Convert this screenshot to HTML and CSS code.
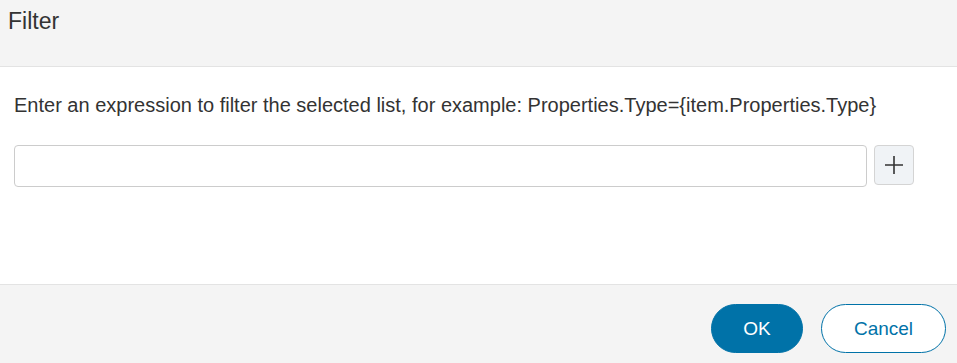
FILE: index.html
```html
<!DOCTYPE html>
<html lang="en">
<head>
    <meta charset="UTF-8">
    <meta name="viewport" content="width=device-width, initial-scale=1.0">
    <title>Filter</title>
    <link rel="stylesheet" href="styles.css">
</head>
<body>
    <div class="dialog">
        <div class="dialog-header">
            <h1 class="dialog-title">Filter</h1>
        </div>

        <div class="dialog-body">
            <p class="hint">Enter an expression to filter the selected list, for example: Properties.Type={item.Properties.Type}</p>
            <div class="input-row">
                <input class="expr-input" type="text" id="expression" name="expression">
                <button class="add-button" type="button" title="Add">
                    <svg width="20" height="20" viewBox="0 0 20 20">
                        <path d="M10 1v18M1 10h18" stroke="#333" stroke-width="1.6" fill="none"/>
                    </svg>
                </button>
            </div>
        </div>

        <!-- Footer buttons -->
        <div class="dialog-footer">
            <button class="btn btn-primary" type="button">OK</button>
            <button class="btn btn-secondary" type="button">Cancel</button>
        </div>
    </div>
</body>
</html>
```

FILE: styles.css
```css
body {
    margin: 0;
    padding: 0;
    font-family: "Liberation Sans", Arial, sans-serif;
    color: #333;
    background-color: #fff;
}

.dialog {
    width: 957px;
    height: 363px;
    display: flex;
    flex-direction: column;
}

.dialog-header {
    height: 67px;
    background-color: #f4f4f4;
    border-bottom: 1px solid #e3e3e3;
    box-sizing: border-box;
    padding: 8px 8px 0;
}

.dialog-title {
    margin: 0;
    font-size: 23px;
    font-weight: normal;
    color: #333;
}

.dialog-body {
    height: 217px;
    padding: 0 14px;
    box-sizing: border-box;
}

.hint {
    margin: 0;
    padding-top: 27px;
    font-size: 20px;
    line-height: 23px;
    color: #333;
}

.input-row {
    display: flex;
    align-items: flex-start;
    gap: 7px;
    margin-top: 28px;
}

.expr-input {
    width: 853px;
    height: 42px;
    box-sizing: border-box;
    border: 1px solid #ccc;
    border-radius: 4px;
    padding: 0 10px;
    font-size: 16px;
    font-family: inherit;
}

.add-button {
    width: 40px;
    height: 40px;
    padding: 0;
    border: 1px solid #d4d4d4;
    border-radius: 4px;
    background-color: #f0f3f6;
    display: flex;
    align-items: center;
    justify-content: center;
    cursor: pointer;
}

.dialog-footer {
    flex: 1;
    background-color: #f4f4f4;
    border-top: 1px solid #e3e3e3;
    display: flex;
    justify-content: flex-end;
    align-items: flex-start;
    gap: 18px;
    padding: 19px 11px 0 0;
}

.btn {
    height: 49px;
    border-radius: 25px;
    font-size: 19px;
    font-family: inherit;
    cursor: pointer;
}

.btn-primary {
    width: 92px;
    background-color: #0072a8;
    border: 1px solid #0072a8;
    color: #fff;
}

.btn-secondary {
    width: 125px;
    background-color: #fff;
    border: 1px solid #0072a8;
    color: #0072a8;
}
```
